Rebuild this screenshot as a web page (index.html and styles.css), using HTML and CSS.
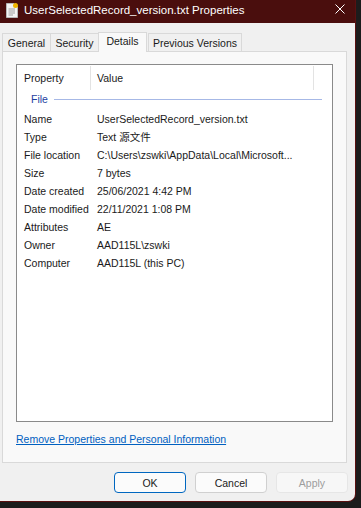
FILE: index.html
```html
<!DOCTYPE html>
<html lang="en">
<head>
  <meta charset="UTF-8" />
  <meta name="viewport" content="width=device-width, initial-scale=1.0"/>
  <title>UserSelectedRecord_version.txt Properties</title>
  <link rel="stylesheet" href="styles.css">
</head>
<body>

  <div class="window">

    <!-- ======= TITLE BAR ======= -->
    <div class="titlebar">
      <svg class="file-icon" width="12" height="15" viewBox="0 0 12 15">
        <path d="M0.5 0.5 H8 L11.5 4 V14.5 H0.5 Z" fill="#f4f4f4" stroke="#b8b8b8"/>
        <path d="M2.5 6 H9 M2.5 8 H9 M2.5 10 H9 M2.5 12 H7" stroke="#a0a0a0" stroke-width="1"/>
        <circle cx="9.5" cy="2.5" r="2.5" fill="#f0b400"/>
      </svg>
      <span class="title">UserSelectedRecord_version.txt Properties</span>
      <svg class="close" width="10" height="10" viewBox="0 0 10 10">
        <path d="M0.5 0.5 L9.5 9.5 M9.5 0.5 L0.5 9.5" stroke="#ffffff" stroke-width="1"/>
      </svg>
    </div>

    <!-- ======= TABS ======= -->
    <div class="tabs">
      <div class="tab">General</div>
      <div class="tab">Security</div>
      <div class="tab active">Details</div>
      <div class="tab">Previous Versions</div>
    </div>

    <div class="panel">
      <div class="list">
        <div class="list-head">
          <div class="col-prop">Property</div>
          <div class="col-val">Value</div>
          <div class="col-rest"></div>
        </div>
        <div class="group">
          <span>File</span>
          <div class="group-line"></div>
        </div>
        <div id="rows"></div>
      </div>
      <a class="link" href="#">Remove Properties and Personal Information</a>
    </div>

    <!-- ======= BUTTONS ======= -->
    <div class="buttons">
      <button class="btn default">OK</button>
      <button class="btn">Cancel</button>
      <button class="btn disabled">Apply</button>
    </div>
  </div>

  <script>
    const props = [
      ["Name", "UserSelectedRecord_version.txt"],
      ["Type", "Text 源文件"],
      ["File location", "C:\\Users\\zswki\\AppData\\Local\\Microsoft..."],
      ["Size", "7 bytes"],
      ["Date created", "25/06/2021 4:42 PM"],
      ["Date modified", "22/11/2021 1:08 PM"],
      ["Attributes", "AE"],
      ["Owner", "AAD115L\\zswki"],
      ["Computer", "AAD115L (this PC)"]
    ];

    const rows = document.getElementById('rows');

    props.forEach(p => {
      const row = document.createElement('div');
      row.className = 'row';
      row.innerHTML = `
        <div class="col-prop">${p[0]}</div>
        <div class="col-val">${p[1]}</div>
      `;
      rows.appendChild(row);
    });
  </script>
</body>
</html>
```

FILE: styles.css
```css
body {
  font-family: 'Liberation Sans', 'Noto Sans CJK SC', sans-serif;
  font-size: 10.5px;
  margin: 0;
  padding: 0;
  background: #1c1c1c;
  color: #1a1a1a;
  height: 508px;
  overflow: hidden;
}

.window {
  width: 355px;
  height: 501px;
  background: #f0f0f0;
  border-bottom-right-radius: 7px;
  box-shadow: 1px 0 0 #5a1010, 0 1px 0 #5a1010;
  overflow: hidden;
}

/* ===== TITLE BAR ===== */
.titlebar {
  height: 23px;
  background: #4a0e0d;
  display: flex;
  align-items: center;
  padding: 0 0 0 6px;
}

.file-icon {
  margin-top: -2px;
}

.title {
  color: #ffffff;
  font-size: 11.5px;
  margin-left: 6px;
  flex: 1;
  margin-top: -3px;
}

.close {
  margin-right: 10px;
  margin-top: -5px;
}

/* ===== TABS ===== */
.tabs {
  display: flex;
  align-items: flex-end;
  margin-top: 8px;
  padding-left: 2px;
  height: 20px;
}

.tab {
  box-sizing: border-box;
  min-width: 49px;
  height: 18px;
  padding: 0 4px;
  text-align: center;
  border: 1px solid #d9d9d9;
  border-bottom: none;
  margin-right: -1px;
  line-height: 18px;
  background: #f0f0f0;
  position: relative;
}

.tab.active {
  height: 20px;
  line-height: 16px;
  background: #f9f9f9;
  margin: 0 1px 0 0;
  z-index: 1;
  top: 1px;
}

.panel {
  box-sizing: border-box;
  margin: 0 8px 0 2px;
  height: 412px;
  background: #f9f9f9;
  border: 1px solid #d9d9d9;
  padding: 12px 13px 0;
}

/* ===== LIST ===== */
.list {
  height: 356px;
  background: #ffffff;
  border: 1px solid #8a8a8a;
}

.list-head {
  display: flex;
  height: 25px;
  align-items: center;
}

.list-head .col-prop {
  width: 66px;
  padding-left: 7px;
  border-right: 1px solid #e3e3e3;
  height: 24px;
  line-height: 24px;
}

.list-head .col-val {
  width: 216px;
  padding-left: 6px;
  border-right: 1px solid #e3e3e3;
  height: 24px;
  line-height: 24px;
}

.group {
  display: flex;
  align-items: center;
  height: 18px;
  margin-bottom: 2px;
  padding-left: 14px;
  color: #1e3f9f;
}

.group-line {
  flex: 1;
  height: 1px;
  background: #a6b8e6;
  margin: 0 10px 0 6px;
}

.row {
  display: flex;
  height: 18px;
  line-height: 18px;
  white-space: nowrap;
}

.row .col-prop {
  width: 73px;
  padding-left: 7px;
}

.link {
  display: block;
  margin-top: 11px;
  color: #0060c0;
}

/* ===== BUTTONS ===== */
.buttons {
  display: flex;
  justify-content: flex-end;
  gap: 9px;
  padding: 9px 7px 0 0;
}

.btn {
  width: 72px;
  height: 21px;
  font-family: 'Liberation Sans', sans-serif;
  font-size: 10.5px;
  background: #fbfbfb;
  border: 1px solid #d0d0d0;
  border-radius: 4px;
  color: #1a1a1a;
  padding: 0;
}

.btn.default {
  border-color: #0067c0;
}

.btn.disabled {
  color: #9d9d9d;
  border-color: #e6e6e6;
  background: #f7f7f7;
}
```
